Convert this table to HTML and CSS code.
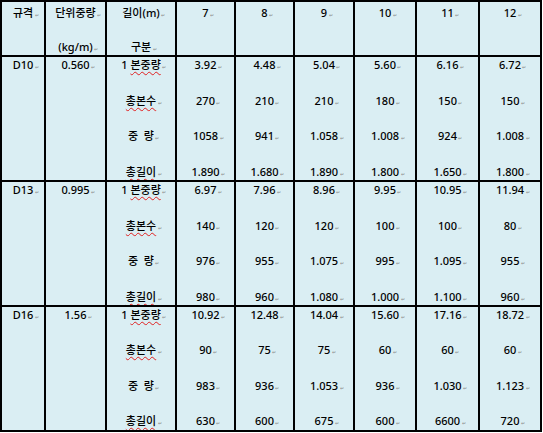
FILE: index.html
```html
<!DOCTYPE html>
<html lang="ko">
<head>
<meta charset="utf-8">
<link rel="stylesheet" href="styles.css">
</head>
<body>
<table class="spec">
  <colgroup>
    <col class="c44"><col class="c61"><col class="c70"><col class="c59"><col class="c59"><col class="c60"><col class="c62"><col class="c63"><col class="c62">
  </colgroup>
  <tr class="head">
    <td><div class="cell h"><p class="l">규격</p></div></td>
    <td><div class="cell h"><p class="l">단위중량</p><p class="l">(kg/m)</p></div></td>
    <td><div class="cell h"><p class="l">길이(m)</p><p class="l">구분</p></div></td>
    <td><div class="cell h"><p class="l">7</p></div></td>
    <td><div class="cell h"><p class="l">8</p></div></td>
    <td><div class="cell h"><p class="l">9</p></div></td>
    <td><div class="cell h"><p class="l">10</p></div></td>
    <td><div class="cell h"><p class="l">11</p></div></td>
    <td><div class="cell h"><p class="l">12</p></div></td>
  </tr>
  <tr class="blk b1">
    <td><div class="cell"><p class="l">D10</p></div></td>
    <td><div class="cell"><p class="l">0.560</p></div></td>
    <td><div class="cell"><p class="l">1 <span class="sq">본중량</span></p><p class="l"><span class="sq">총본수</span></p><p class="l">중&nbsp;&nbsp;량</p><p class="l"><span class="sq">총길이</span></p></div></td>
    <td><div class="cell"><p class="l">3.92</p><p class="l">270</p><p class="l">1058</p><p class="l">1.890</p></div></td>
    <td><div class="cell"><p class="l">4.48</p><p class="l">210</p><p class="l">941</p><p class="l">1.680</p></div></td>
    <td><div class="cell"><p class="l">5.04</p><p class="l">210</p><p class="l">1.058</p><p class="l">1.890</p></div></td>
    <td><div class="cell"><p class="l">5.60</p><p class="l">180</p><p class="l">1.008</p><p class="l">1.800</p></div></td>
    <td><div class="cell"><p class="l">6.16</p><p class="l">150</p><p class="l">924</p><p class="l">1.650</p></div></td>
    <td><div class="cell"><p class="l">6.72</p><p class="l">150</p><p class="l">1.008</p><p class="l">1.800</p></div></td>
  </tr>
  <tr class="blk b2">
    <td><div class="cell"><p class="l">D13</p></div></td>
    <td><div class="cell"><p class="l">0.995</p></div></td>
    <td><div class="cell"><p class="l">1 <span class="sq">본중량</span></p><p class="l"><span class="sq">총본수</span></p><p class="l">중&nbsp;&nbsp;량</p><p class="l"><span class="sq">총길이</span></p></div></td>
    <td><div class="cell"><p class="l">6.97</p><p class="l">140</p><p class="l">976</p><p class="l">980</p></div></td>
    <td><div class="cell"><p class="l">7.96</p><p class="l">120</p><p class="l">955</p><p class="l">960</p></div></td>
    <td><div class="cell"><p class="l">8.96</p><p class="l">120</p><p class="l">1.075</p><p class="l">1.080</p></div></td>
    <td><div class="cell"><p class="l">9.95</p><p class="l">100</p><p class="l">995</p><p class="l">1.000</p></div></td>
    <td><div class="cell"><p class="l">10.95</p><p class="l">100</p><p class="l">1.095</p><p class="l">1.100</p></div></td>
    <td><div class="cell"><p class="l">11.94</p><p class="l">80</p><p class="l">955</p><p class="l">960</p></div></td>
  </tr>
  <tr class="blk b3">
    <td><div class="cell"><p class="l">D16</p></div></td>
    <td><div class="cell"><p class="l">1.56</p></div></td>
    <td><div class="cell"><p class="l">1 <span class="sq">본중량</span></p><p class="l"><span class="sq">총본수</span></p><p class="l">중&nbsp;&nbsp;량</p><p class="l"><span class="sq">총길이</span></p></div></td>
    <td><div class="cell"><p class="l">10.92</p><p class="l">90</p><p class="l">983</p><p class="l">630</p></div></td>
    <td><div class="cell"><p class="l">12.48</p><p class="l">75</p><p class="l">936</p><p class="l">600</p></div></td>
    <td><div class="cell"><p class="l">14.04</p><p class="l">75</p><p class="l">1.053</p><p class="l">675</p></div></td>
    <td><div class="cell"><p class="l">15.60</p><p class="l">60</p><p class="l">936</p><p class="l">600</p></div></td>
    <td><div class="cell"><p class="l">17.16</p><p class="l">60</p><p class="l">1.030</p><p class="l">6600</p></div></td>
    <td><div class="cell"><p class="l">18.72</p><p class="l">60</p><p class="l">1.123</p><p class="l">720</p></div></td>
  </tr>
</table>
</body>
</html>
```
FILE: styles.css
```css
html, body {
  margin: 0;
  padding: 0;
  background: #ffffff;
}
body {
  font-family: "Noto Sans", "Noto Sans CJK KR", sans-serif;
  font-size: 11px;
  color: #000;
}
.spec {
  border-collapse: collapse;
  table-layout: fixed;
  width: 542px;
  background: #daeef3;
}
.c44 { width: 44px; }
.c61 { width: 61px; }
.c70 { width: 70px; }
.c59 { width: 59px; }
.c60 { width: 60px; }
.c62 { width: 62px; }
.c63 { width: 63px; }
.spec td {
  border: 2px solid #000;
  padding: 0;
  vertical-align: top;
  text-align: center;
  overflow: hidden;
}
.head td { height: 53px; }
.b1 td { height: 123px; }
.b2 td { height: 122px; }
.b3 td { height: 123px; }
.cell {
  display: flex;
  flex-direction: column;
  gap: 19.5px;
  padding-top: 0;
}
.cell.h {
  gap: 18px;
  padding-top: 3px;
}
.l {
  margin: 0;
  height: 16px;
  line-height: 16px;
  white-space: nowrap;
  font-weight: 500;
}
.l::after {
  content: "\21B5";
  display: inline-block;
  width: 5px;
  font-size: 5px;
  color: #8a8a8a;
  margin-left: 1px;
  margin-right: -6px;
}
.sq {
  text-decoration: underline wavy #e02020;
  text-decoration-thickness: 1px;
  text-underline-offset: 2px;
}
```
